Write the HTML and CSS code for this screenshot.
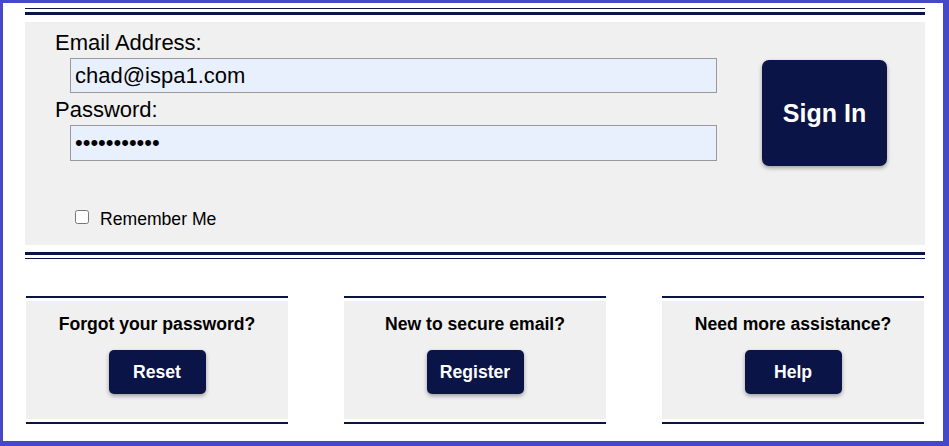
FILE: index.html
```html
<!DOCTYPE html>
<html lang="en">
<head>
<meta charset="utf-8">
<title>Secure Email Sign In</title>
<link rel="stylesheet" href="styles.css">
</head>
<body>
<div class="frame">
  <div class="rule rule-top"></div>
  <form class="panel" onsubmit="return false">
    <div class="fields">
      <label class="label" for="email">Email Address:</label>
      <input class="field" id="email" type="text" value="chad@ispa1.com">
      <label class="label label-pw" for="pw">Password:</label>
      <input class="field" id="pw" type="password" value="12345678901">
      <div class="remember">
        <input class="check" id="rem" type="checkbox">
        <label class="rem-label" for="rem">Remember Me</label>
      </div>
    </div>
    <button class="signin" type="submit">Sign In</button>
  </form>
  <div class="rule rule-bottom"></div>
  <div class="cards">
    <div class="card">
      <div class="card-body">
        <div class="card-title">Forgot your password?</div>
        <button class="btn" type="button">Reset</button>
      </div>
    </div>
    <div class="card">
      <div class="card-body">
        <div class="card-title">New to secure email?</div>
        <button class="btn" type="button">Register</button>
      </div>
    </div>
    <div class="card">
      <div class="card-body">
        <div class="card-title">Need more assistance?</div>
        <button class="btn" type="button">Help</button>
      </div>
    </div>
  </div>
</div>
</body>
</html>
```

FILE: styles.css
```css
html, body {
  margin: 0;
  padding: 0;
}
body {
  background: #4549c9;
  font-family: "Liberation Sans", Arial, sans-serif;
  color: #000;
  width: 949px;
  height: 446px;
  overflow: hidden;
}
.frame {
  margin: 3px 0 0 3px;
  width: 940px;
  height: 438px;
  background: #fff;
  box-sizing: border-box;
  padding: 5px 18px 0 22px;
}
.rule {
  width: 900px;
  box-sizing: border-box;
}
.rule-top {
  border-top: 1px solid #0b1446;
  border-bottom: 3px solid #0b1446;
  height: 7px;
}
.rule-bottom {
  margin-top: 7px;
  border-top: 3px solid #0b1446;
  border-bottom: 1px solid #0b1446;
  height: 7px;
}
.panel {
  margin: 7px 0 0 0;
  width: 900px;
  height: 223px;
  background: #f0f0f0;
  box-sizing: border-box;
  padding: 8px 38px 0 30px;
  display: flex;
  align-items: flex-start;
}
.fields {
  display: flex;
  flex-direction: column;
  align-items: flex-start;
}
.label {
  font-size: 22px;
  line-height: 25px;
}
.label-pw {
  margin-top: 4px;
}
.field {
  margin: 3px 0 0 15px;
  width: 647px;
  height: 35px;
  box-sizing: border-box;
  border: 1px solid #999;
  background: #e8f0fe;
  font-family: "Liberation Sans", Arial, sans-serif;
  font-size: 22px;
  padding: 0 4px;
  color: #000;
  outline: none;
}
.field[type="password"] {
  height: 36px;
}
.remember {
  margin: 48px 0 0 20px;
  display: flex;
  align-items: flex-start;
}
.check {
  margin: 1px 11px 0 0;
  width: 14px;
  height: 14px;
}
.rem-label {
  font-size: 17.6px;
  line-height: 21px;
}
.signin {
  margin: 30px 0 0 auto;
  width: 125px;
  height: 106px;
  border: none;
  border-radius: 7px;
  background: #0b1446;
  color: #fff;
  font-family: "Liberation Sans", Arial, sans-serif;
  font-weight: bold;
  font-size: 25px;
  box-shadow: 0 2px 4px rgba(0, 0, 0, 0.35);
  padding: 0;
}
.cards {
  margin-top: 37px;
  padding-left: 1px;
  display: flex;
  gap: 56px;
}
.card {
  width: 262px;
  border-top: 2px solid #0b1446;
  border-bottom: 2px solid #0b1446;
  padding: 3px 0;
}
.card-body {
  background: #f0f0f0;
  height: 118px;
  box-sizing: border-box;
  padding-top: 13px;
  display: flex;
  flex-direction: column;
  align-items: center;
}
.card-title {
  font-weight: bold;
  font-size: 17.6px;
  line-height: 20px;
}
.btn {
  margin-top: 16px;
  width: 97px;
  height: 44px;
  border: none;
  border-radius: 5px;
  background: #0b1446;
  color: #fff;
  font-family: "Liberation Sans", Arial, sans-serif;
  font-weight: bold;
  font-size: 17.6px;
  box-shadow: 0 2px 4px rgba(0, 0, 0, 0.35);
  padding: 0;
}
```
